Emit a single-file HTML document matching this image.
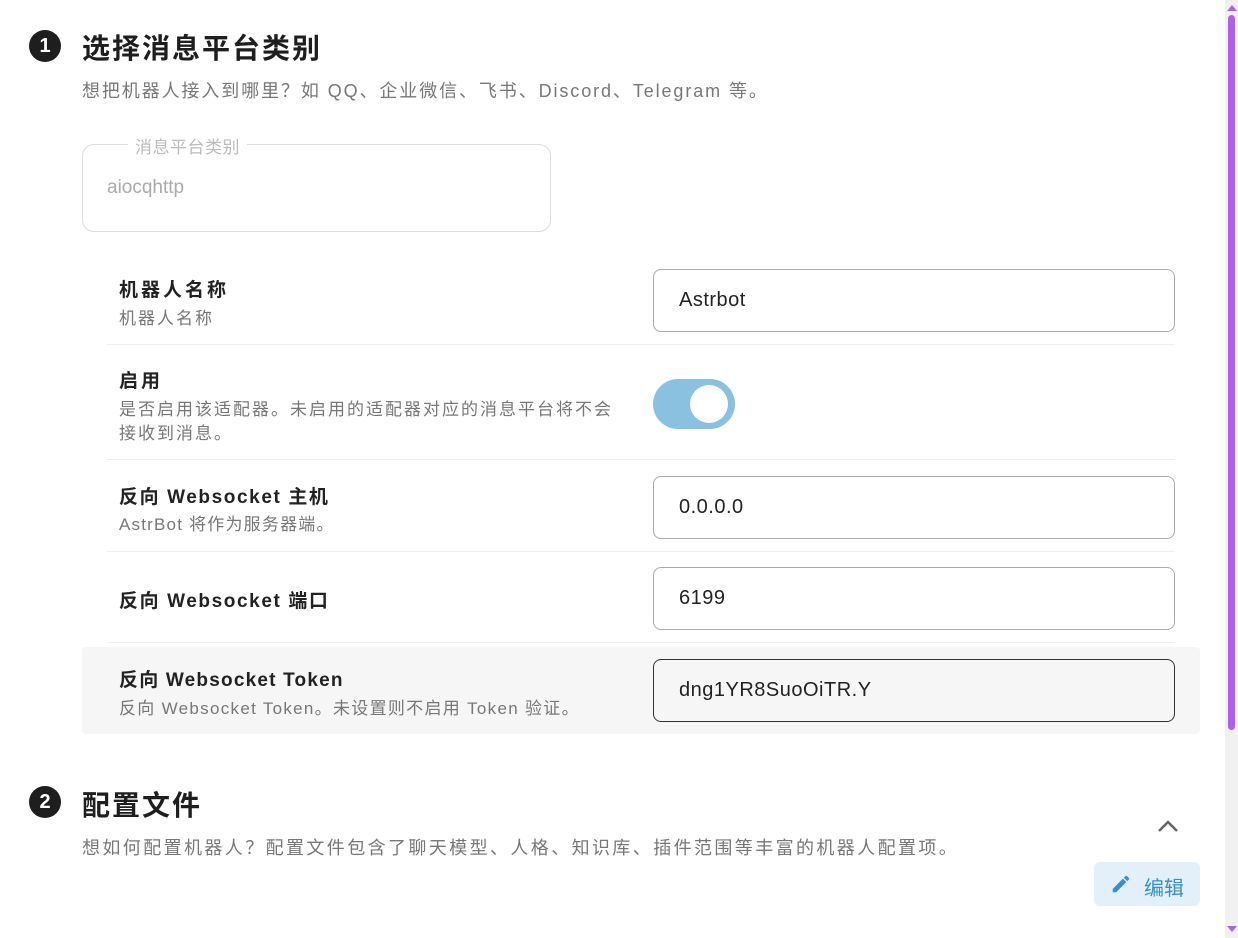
<!DOCTYPE html>
<html><head><meta charset="utf-8"><style>
*{box-sizing:border-box;margin:0;padding:0}
body{width:1238px;height:938px;overflow:hidden;background:#fff;font-family:"Liberation Sans","Noto Sans CJK SC",sans-serif;color:#222;position:relative}
.a{position:absolute}
.num{width:32px;height:32px;border-radius:50%;background:#1e1e1e;color:#fff;font-weight:bold;font-size:20px;text-align:center;line-height:32px}
.h{font-size:28px;font-weight:bold;color:#1e1e1e;letter-spacing:2px}
.sub{font-size:18px;color:#777;letter-spacing:1.9px}
.lbl{font-size:19px;font-weight:bold;color:#222;letter-spacing:1.6px}
.desc{font-size:17px;color:#777;line-height:24px;letter-spacing:2px}
.inp{position:absolute;left:653px;width:522px;height:63px;border:1px solid #aaa;border-radius:8px;font-size:20px;padding-left:25px;line-height:61px;color:#222;letter-spacing:0.5px}
.sep{position:absolute;left:107px;width:1068px;height:1px;background:#eee}
</style></head><body>
<div class="a num" style="left:29px;top:30px">1</div>
<div class="a h" style="left:82px;top:27px">选择消息平台类别</div>
<div class="a sub" style="left:82px;top:77px">想把机器人接入到哪里？如 QQ、企业微信、飞书、Discord、Telegram 等。</div>
<div class="a" style="left:82px;top:144px;width:469px;height:88px;border:1px solid #ddd;border-radius:12px"></div>
<div class="a" style="left:128px;top:133px;background:#fff;padding:0 7px;font-size:17px;color:#bbb;letter-spacing:0.5px">消息平台类别</div>
<div class="a" style="left:107px;top:177px;font-size:19px;color:#aaa">aiocqhttp</div>

<div class="a lbl" style="left:119px;top:275px;letter-spacing:3px">机器人名称</div>
<div class="a desc" style="left:119px;top:307px">机器人名称</div>
<div class="inp" style="top:269px">Astrbot</div>
<div class="sep" style="top:344px"></div>

<div class="a lbl" style="left:119px;top:366px;letter-spacing:3px">启用</div>
<div class="a desc" style="left:119px;top:398px">是否启用该适配器。未启用的适配器对应的消息平台将不会<br>接收到消息。</div>
<div class="a" style="left:653px;top:379px;width:82px;height:50px;border-radius:25px;background:#8ac0e0"></div>
<div class="a" style="left:690px;top:385px;width:38px;height:38px;border-radius:50%;background:#fff"></div>
<div class="sep" style="top:459px"></div>

<div class="a lbl" style="left:119px;top:482px">反向 Websocket 主机</div>
<div class="a desc" style="left:119px;top:513px;letter-spacing:1.2px">AstrBot 将作为服务器端。</div>
<div class="inp" style="top:476px">0.0.0.0</div>
<div class="sep" style="top:551px"></div>

<div class="a lbl" style="left:119px;top:586px">反向 Websocket 端口</div>
<div class="inp" style="top:567px">6199</div>
<div class="sep" style="top:642px"></div>

<div class="a" style="left:82px;top:647px;width:1118px;height:87px;background:#f6f6f6;border-radius:4px"></div>
<div class="a lbl" style="left:119px;top:665px;letter-spacing:1.2px">反向 Websocket Token</div>
<div class="a desc" style="left:119px;top:697px;letter-spacing:1.3px">反向 Websocket Token。未设置则不启用 Token 验证。</div>
<div class="inp" style="top:659px;border-color:#333">dng1YR8SuoOiTR.Y</div>

<div class="a num" style="left:29px;top:786px">2</div>
<div class="a h" style="left:82px;top:784px">配置文件</div>
<div class="a sub" style="left:82px;top:834px;letter-spacing:2.4px">想如何配置机器人？配置文件包含了聊天模型、人格、知识库、插件范围等丰富的机器人配置项。</div>
<svg class="a" style="left:1157px;top:818px" width="22" height="16"><path d="M2 13 L11 4 L20 13" stroke="#666" stroke-width="2.5" fill="none"/></svg>
<div class="a" style="left:1094px;top:862px;width:106px;height:44px;border-radius:6px;background:#e3f0f9"></div>
<svg class="a" style="left:1110px;top:873px" width="22" height="22" viewBox="0 0 24 24"><path fill="#3a8fc8" d="M3 17.25V21h3.75L17.81 9.94l-3.75-3.75L3 17.25zM20.71 7.04a1 1 0 000-1.41l-2.34-2.34a1 1 0 00-1.41 0l-1.83 1.83 3.75 3.75 1.83-1.83z"/></svg>
<div class="a" style="left:1144px;top:872px;font-size:20px;color:#3a8fc8">编辑</div>

<div class="a" style="left:1225px;top:0;width:13px;height:938px;background:#f1f1f1"></div>
<div class="a" style="left:1228px;top:15px;width:7px;height:715px;border-radius:4px;background:#b060e8"></div>
<svg class="a" style="left:1227px;top:5px" width="10" height="6"><path d="M0 6L5 0L10 6Z" fill="#b060e8"/></svg>
<svg class="a" style="left:1227px;top:926px" width="10" height="6"><path d="M0 0L5 6L10 0Z" fill="#b060e8"/></svg>
</body></html>
